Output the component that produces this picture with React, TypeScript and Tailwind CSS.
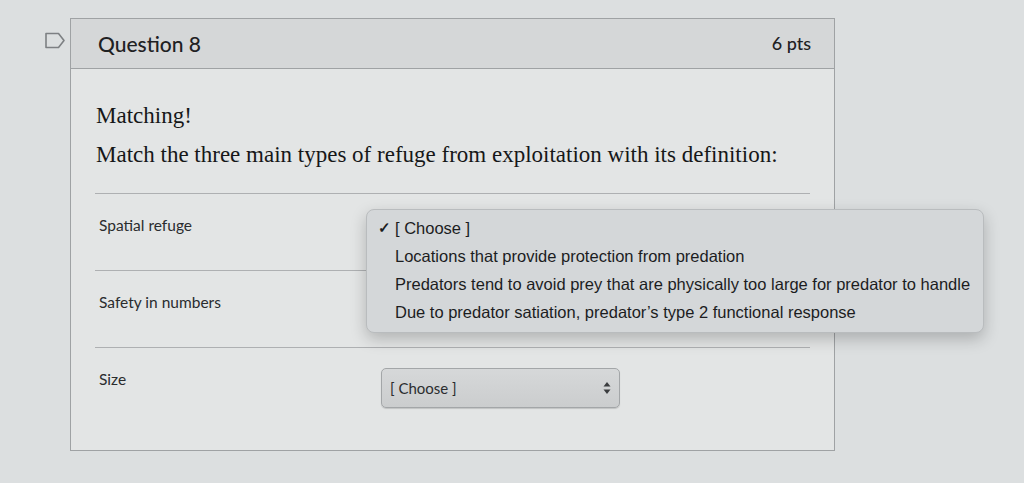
const options = [
  "Locations that provide protection from predation",
  "Predators tend to avoid prey that are physically too large for predator to handle",
  "Due to predator satiation, predator\u2019s type 2 functional response",
];

const rows = ["Spatial refuge", "Safety in numbers", "Size"];

function FlagIcon() {
  return (
    <svg width="22" height="17" viewBox="0 0 22 17" className="mt-[14px]">
      <path
        d="M2 1.5 H14.5 L20 8.5 L14.5 15.5 H2 Z"
        fill="none"
        stroke="#7d8083"
        strokeWidth="1.6"
        strokeLinejoin="round"
      />
    </svg>
  );
}

function SelectBox({ hidden }: { hidden?: boolean }) {
  return (
    <div className="w-[239px] h-[40px] rounded-[5px] border border-[#a3a6a8] bg-gradient-to-b from-[#d6d8d9] to-[#cbcdce] shadow-[0_1px_1px_rgba(0,0,0,0.15)] flex items-center justify-between pl-[8px] pr-[8px]">
      <span
        className={`text-[15px] text-[#2b2d2f] font-['Lato',sans-serif] ${
          hidden ? "invisible" : ""
        }`}
      >
        [ Choose ]
      </span>
      <svg width="8" height="14" viewBox="0 0 8 14">
        <path d="M4 1 L7.5 5.5 H0.5 Z" fill="#3a3c3e" />
        <path d="M4 13 L7.5 8.5 H0.5 Z" fill="#3a3c3e" />
      </svg>
    </div>
  );
}

export default function App() {
  return (
    <div className="w-[1024px] h-[483px] bg-[#dcdfe0] overflow-hidden flex pt-[18px] pl-[44px]">
      <FlagIcon />
      <div className="relative ml-[4px] w-[765px] h-[433px] border border-[#9fa2a4] bg-[#e3e5e5] flex flex-col">
        <div className="h-[50px] bg-[#d5d7d8] border-b border-[#9fa2a4] flex items-center justify-between pl-[27px] pr-[23px] font-['Lato',sans-serif] text-[#1f2123]">
          <span className="text-[21px] font-medium">Question 8</span>
          <span className="text-[18px] font-medium">6 pts</span>
        </div>
        <div className="px-[25px] pt-[32px] font-['Liberation_Serif',serif] text-[#161718] text-[23px]">
          <p className="leading-[30px]">Matching!</p>
          <p className="leading-[30px] mt-[9px]">
            Match the three main types of refuge from exploitation with its definition:
          </p>
        </div>
        <div className="mx-[24px] mt-[23px] flex flex-col">
          {rows.map((label, i) => (
            <div
              key={label}
              className="h-[77px] border-t border-[#aeb0b2] flex items-start"
            >
              <span className="w-[286px] pl-[4px] pt-[21px] text-[15.5px] leading-[20px] text-[#2a2c2e] font-['Lato',sans-serif]">
                {label}
              </span>
              <div className="pt-[20px]">
                <SelectBox hidden={i < 2} />
              </div>
            </div>
          ))}
        </div>

        <div className="absolute left-[295px] top-[190px] w-[618px] rounded-[8px] bg-[#d4d7d9] border border-[#b9bcbe] shadow-[0_6px_16px_rgba(0,0,0,0.22)] pt-[4px] pb-[6px] font-['Liberation_Sans',Arial,sans-serif] text-[16.5px] text-[#1c1d1f]">
          <div className="h-[28px] flex items-center pl-[11px]">
            <span className="w-[17px] text-[15px] font-semibold">✓</span>
            <span>[ Choose ]</span>
          </div>
          {options.map((o) => (
            <div key={o} className="h-[28px] flex items-center pl-[28px]">
              {o}
            </div>
          ))}
        </div>
      </div>
    </div>
  );
}
